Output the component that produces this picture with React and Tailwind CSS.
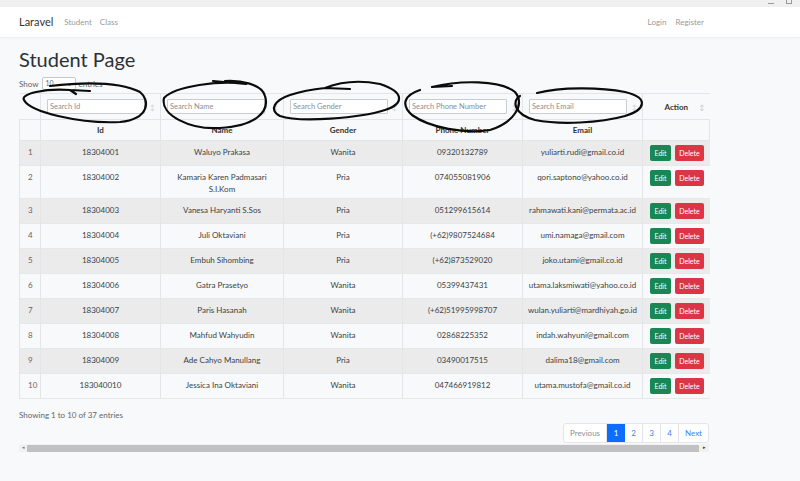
import React from 'react';

const students = [
  { id: '18304001', name: 'Waluyo Prakasa', gender: 'Wanita', phone: '09320132789', email: 'yuliarti.rudi@gmail.co.id' },
  { id: '18304002', name: 'Kamaria Karen Padmasari\nS.I.Kom', gender: 'Pria', phone: '074055081906', email: 'qori.saptono@yahoo.co.id' },
  { id: '18304003', name: 'Vanesa Haryanti S.Sos', gender: 'Pria', phone: '051299615614', email: 'rahmawati.kani@permata.ac.id' },
  { id: '18304004', name: 'Juli Oktaviani', gender: 'Pria', phone: '(+62)9807524684', email: 'umi.namaga@gmail.com' },
  { id: '18304005', name: 'Embuh Sihombing', gender: 'Pria', phone: '(+62)873529020', email: 'joko.utami@gmail.co.id' },
  { id: '18304006', name: 'Gatra Prasetyo', gender: 'Wanita', phone: '05399437431', email: 'utama.laksmiwati@yahoo.co.id' },
  { id: '18304007', name: 'Paris Hasanah', gender: 'Wanita', phone: '(+62)51995998707', email: 'wulan.yuliarti@mardhiyah.go.id' },
  { id: '18304008', name: 'Mahfud Wahyudin', gender: 'Wanita', phone: '02868225352', email: 'indah.wahyuni@gmail.com' },
  { id: '18304009', name: 'Ade Cahyo Manullang', gender: 'Pria', phone: '03490017515', email: 'dalima18@gmail.com' },
  { id: '183040010', name: 'Jessica Ina Oktaviani', gender: 'Wanita', phone: '047466919812', email: 'utama.mustofa@gmail.co.id' },
];

const searches = ['Search Id', 'Search Name', 'Search Gender', 'Search Phone Number', 'Search Email'];
const labels = ['Id', 'Name', 'Gender', 'Phone Number', 'Email'];

function SortIcon() {
  return <span className="absolute right-[5px] top-1/2 -translate-y-1/2 text-[7px] leading-none text-[#d0d0d0]">↕</span>;
}

// hand-drawn marker circles over the search inputs
function Scribbles() {
  return (
    <svg className="absolute inset-0 pointer-events-none" width="800" height="481" viewBox="0 0 800 481" fill="none" stroke="#0b0b0b" strokeWidth="2.2" strokeLinecap="round" strokeLinejoin="round">
      <path d="M90 91 L70 90 L76 94 M70 90 C45 88 20 94 24 100 C30 112 80 124 120 122 C150 119 150 100 140 92 C120 82 85 82 50 86" />
      <path d="M213 81 L246 84 M246 84 C220 80 175 86 164 98 C160 115 190 130 220 128 C255 126 270 112 265 96 C262 84 240 80 225 81" />
      <path d="M325 88 L350 89 M325 88 C340 82 360 80 380 84 C405 92 404 104 385 110 C360 118 300 123 280 116 C268 110 275 100 290 95 C305 90 315 89 325 88" />
      <path d="M432 87 L452 86 M432 87 C460 80 500 80 515 92 C525 104 515 122 490 130 C465 134 430 128 412 115 C400 104 405 95 420 90" />
      <path d="M537 93 C560 87 600 87 625 92 C650 98 645 110 625 116 C600 123 560 125 535 120 C513 114 512 100 520 96" />
    </svg>
  );
}

export default function App() {
  return (
    <div className="relative w-[800px] h-[481px] overflow-hidden bg-[#f8f9fa] text-[#3a3f44]" style={{ fontFamily: 'Lato, "Noto Sans", sans-serif' }}>
      {/* browser strip */}
      <div className="h-[7px] bg-[#f0f0f0] flex justify-end items-start gap-[12px] pr-[8px]">
        <span className="w-[6px] h-[3px] mt-[1px] border-b border-[#999]" />
        <span className="w-[6px] h-[4px] border border-t-0 border-[#999]" />
      </div>

      {/* navbar */}
      <nav className="h-[30px] bg-white shadow-[0_1px_2px_rgba(0,0,0,0.06)]">
        <div className="w-[728px] px-[19px] h-full flex items-center justify-between">
          <div className="flex items-center gap-[11px]">
            <span className="text-[11px] text-[#333]">Laravel</span>
            <span className="text-[8px] text-[#9a9a9a]">Student</span>
            <span className="text-[8px] text-[#9a9a9a] -ml-[3px]">Class</span>
          </div>
          <div className="flex items-center gap-[9px] pr-[5px] text-[8px] text-[#9a9a9a]">
            <span>Login</span>
            <span>Register</span>
          </div>
        </div>
      </nav>

      <main className="w-[728px] px-[19px] pt-[10px]">
        <h1 className="text-[20px] leading-[25px] text-[#2c3136]">Student Page</h1>

        <div className="mt-[5px] flex items-center gap-[3px] text-[8px] text-[#666]">
          <span>Show</span>
          <span className="w-[34px] h-[13px] bg-white border border-[#c8c8c8] rounded-[2px] flex items-center justify-between px-[3px] text-[7px]">
            <span>10</span>
            <span className="text-[6px]">⌄</span>
          </span>
          <span>entries</span>
        </div>

        <table className="mt-[3px] w-[690px] table-fixed border-collapse text-[8px] leading-[12px]">
          <colgroup>
            <col className="w-[21px]" />
            <col className="w-[120px]" />
            <col className="w-[123px]" />
            <col className="w-[119px]" />
            <col className="w-[120px]" />
            <col className="w-[120px]" />
            <col className="w-[67px]" />
          </colgroup>
          <thead>
            <tr className="h-[26px] border-t border-b border-[#e3e5e8]">
              <th className="border-r border-[#e3e5e8]" />
              {searches.map((s) => (
                <th key={s} className="relative border-r border-[#e3e5e8] pl-[6px] text-left font-normal">
                  <div className="w-[98px] h-[15px] bg-white border border-[#c9cdd1] rounded-[1px] px-[2px] flex items-center text-[7.5px] text-[#8a8f94]">{s}</div>
                  <SortIcon />
                </th>
              ))}
              <th className="relative font-bold text-[8px] text-[#333]">
                Action
                <SortIcon />
              </th>
            </tr>
            <tr className="h-[21px] border-b border-[#e3e5e8]">
              <th className="border-r border-l border-[#e3e5e8]" />
              {labels.map((l) => (
                <th key={l} className="border-r border-[#e3e5e8] font-bold text-[#333]">{l}</th>
              ))}
              <th className="border-r border-[#e3e5e8]" />
            </tr>
          </thead>
          <tbody>
            {students.map((s, i) => (
              <tr key={s.id} className={`${i % 2 === 0 ? 'bg-[#ebebec]' : 'bg-[#f8f9fa]'} border-b border-[#e6e8ea]`}>
                <td className="align-top pt-[5px] pb-[3px] pl-[8px] border-l border-r border-[#e3e5e8] text-[#666]">{i + 1}</td>
                <td className="align-top pt-[5px] pb-[3px] text-center border-r border-[#e3e5e8]">{s.id}</td>
                <td className="align-top pt-[5px] pb-[3px] text-center border-r border-[#e3e5e8] whitespace-pre-line">{s.name}</td>
                <td className="align-top pt-[5px] pb-[3px] text-center border-r border-[#e3e5e8]">{s.gender}</td>
                <td className="align-top pt-[5px] pb-[3px] text-center border-r border-[#e3e5e8]">{s.phone}</td>
                <td className="align-top pt-[5px] pb-[3px] text-center border-r border-[#e3e5e8] whitespace-nowrap">{s.email}</td>
                <td className="align-top pt-[4px] pb-[4px] pl-[7px]">
                  <div className="flex gap-[4px]">
                    <button className="w-[21px] h-[16px] rounded-[2px] bg-[#198754] text-white text-[7px] leading-none">Edit</button>
                    <button className="w-[29px] h-[16px] rounded-[2px] bg-[#dc3545] text-white text-[7px] leading-none">Delete</button>
                  </div>
                </td>
              </tr>
            ))}
          </tbody>
        </table>

        <div className="mt-[10px] text-[8px] text-[#666]">Showing 1 to 10 of 37 entries</div>

        <div className="mt-[2px] flex justify-end">
          <div className="flex h-[20px] text-[8px] border border-[#e3e5e8] rounded-[3px] bg-white overflow-hidden">
            <span className="w-[43px] flex items-center justify-center text-[#8a8f94] border-r border-[#e3e5e8]">Previous</span>
            <span className="w-[18px] flex items-center justify-center bg-[#0d6efd] text-white">1</span>
            <span className="w-[18px] flex items-center justify-center text-[#3b82f6] border-r border-[#e3e5e8]">2</span>
            <span className="w-[18px] flex items-center justify-center text-[#3b82f6] border-r border-[#e3e5e8]">3</span>
            <span className="w-[18px] flex items-center justify-center text-[#3b82f6] border-r border-[#e3e5e8]">4</span>
            <span className="w-[29px] flex items-center justify-center text-[#3b82f6]">Next</span>
          </div>
        </div>

        {/* horizontal scrollbar */}
        <div className="mt-[1px] h-[8px] w-[690px] bg-[#f1f1f1] flex items-center">
          <span className="w-[8px] text-center text-[5px] text-[#777]">◂</span>
          <span className="flex-1 h-[7px] bg-[#c1c1c1]" />
          <span className="w-[10px] text-center text-[5px] text-[#333]">▸</span>
        </div>
      </main>

      <Scribbles />
    </div>
  );
}
